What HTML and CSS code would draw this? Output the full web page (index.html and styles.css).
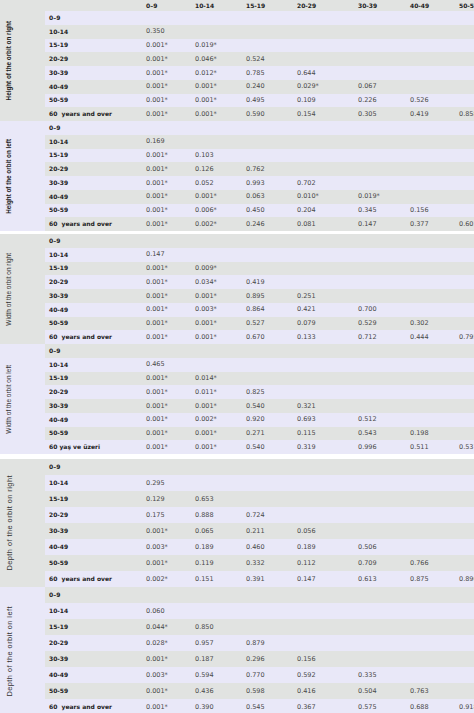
FILE: index.html
```html
<!DOCTYPE html>
<html>
<head>
<meta charset="utf-8">
<link rel="stylesheet" href="styles.css">
</head>
<body>
<div class="table">
  <div class="group g-grey">
    <div class="label bold"><span>Height of the orbit on right</span></div>
    <div class="rows">
      <div class="row hdr g"><span class="age"></span><span>0–9</span><span>10-14</span><span>15-19</span><span>20-29</span><span>30-39</span><span>40-49</span><span>50-59</span></div>
      <div class="row l"><span class="age">0–9</span></div>
      <div class="row g"><span class="age">10-14</span><span>0.350</span></div>
      <div class="row l"><span class="age">15-19</span><span>0.001*</span><span>0.019*</span></div>
      <div class="row g"><span class="age">20-29</span><span>0.001*</span><span>0.046*</span><span>0.524</span></div>
      <div class="row l"><span class="age">30-39</span><span>0.001*</span><span>0.012*</span><span>0.785</span><span>0.644</span></div>
      <div class="row g"><span class="age">40-49</span><span>0.001*</span><span>0.001*</span><span>0.240</span><span>0.029*</span><span>0.067</span></div>
      <div class="row l"><span class="age">50-59</span><span>0.001*</span><span>0.001*</span><span>0.495</span><span>0.109</span><span>0.226</span><span>0.526</span></div>
      <div class="row g"><span class="age">60&nbsp; years and over</span><span>0.001*</span><span>0.001*</span><span>0.590</span><span>0.154</span><span>0.305</span><span>0.419</span><span>0.858</span></div>
    </div>
  </div>
  <div class="group g-lav">
    <div class="label bold"><span>Height of the orbit on left</span></div>
    <div class="rows">
      <div class="row l"><span class="age">0–9</span></div>
      <div class="row g"><span class="age">10-14</span><span>0.169</span></div>
      <div class="row l"><span class="age">15-19</span><span>0.001*</span><span>0.103</span></div>
      <div class="row g"><span class="age">20-29</span><span>0.001*</span><span>0.126</span><span>0.762</span></div>
      <div class="row l"><span class="age">30-39</span><span>0.001*</span><span>0.052</span><span>0.993</span><span>0.702</span></div>
      <div class="row g"><span class="age">40-49</span><span>0.001*</span><span>0.001*</span><span>0.063</span><span>0.010*</span><span>0.019*</span></div>
      <div class="row l"><span class="age">50-59</span><span>0.001*</span><span>0.006*</span><span>0.450</span><span>0.204</span><span>0.345</span><span>0.156</span></div>
      <div class="row g"><span class="age">60&nbsp; years and over</span><span>0.001*</span><span>0.002*</span><span>0.246</span><span>0.081</span><span>0.147</span><span>0.377</span><span>0.601</span></div>
    </div>
  </div>

  <div class="gap gap-sm"></div>

  <div class="group g-grey">
    <div class="label"><span>Width of the orbit on right</span></div>
    <div class="rows">
      <div class="row g"><span class="age">0–9</span></div>
      <div class="row l"><span class="age">10-14</span><span>0.147</span></div>
      <div class="row g"><span class="age">15-19</span><span>0.001*</span><span>0.009*</span></div>
      <div class="row l"><span class="age">20-29</span><span>0.001*</span><span>0.034*</span><span>0.419</span></div>
      <div class="row g"><span class="age">30-39</span><span>0.001*</span><span>0.001*</span><span>0.895</span><span>0.251</span></div>
      <div class="row l"><span class="age">40-49</span><span>0.001*</span><span>0.003*</span><span>0.864</span><span>0.421</span><span>0.700</span></div>
      <div class="row g"><span class="age">50-59</span><span>0.001*</span><span>0.001*</span><span>0.527</span><span>0.079</span><span>0.529</span><span>0.302</span></div>
      <div class="row l"><span class="age">60&nbsp; years and over</span><span>0.001*</span><span>0.001*</span><span>0.670</span><span>0.133</span><span>0.712</span><span>0.444</span><span>0.795–</span></div>
    </div>
  </div>
  <div class="group g-lav">
    <div class="label"><span>Width of the orbit on left</span></div>
    <div class="rows">
      <div class="row g"><span class="age">0–9</span></div>
      <div class="row l"><span class="age">10-14</span><span>0.465</span></div>
      <div class="row g"><span class="age">15-19</span><span>0.001*</span><span>0.014*</span></div>
      <div class="row l"><span class="age">20-29</span><span>0.001*</span><span>0.011*</span><span>0.825</span></div>
      <div class="row g"><span class="age">30-39</span><span>0.001*</span><span>0.001*</span><span>0.540</span><span>0.321</span></div>
      <div class="row l"><span class="age">40-49</span><span>0.001*</span><span>0.002*</span><span>0.920</span><span>0.693</span><span>0.512</span></div>
      <div class="row g"><span class="age">50-59</span><span>0.001*</span><span>0.001*</span><span>0.271</span><span>0.115</span><span>0.543</span><span>0.198</span></div>
      <div class="row l"><span class="age">60 yaş ve üzeri</span><span>0.001*</span><span>0.001*</span><span>0.540</span><span>0.319</span><span>0.996</span><span>0.511</span><span>0.537</span></div>
    </div>
  </div>

  <div class="gap gap-md"></div>

  <div class="group g-grey tall">
    <div class="label depth"><span>Depth of the orbit on right</span></div>
    <div class="rows">
      <div class="row g"><span class="age">0–9</span></div>
      <div class="row l"><span class="age">10-14</span><span>0.295</span></div>
      <div class="row g"><span class="age">15-19</span><span>0.129</span><span>0.653</span></div>
      <div class="row l"><span class="age">20-29</span><span>0.175</span><span>0.888</span><span>0.724</span></div>
      <div class="row g"><span class="age">30-39</span><span>0.001*</span><span>0.065</span><span>0.211</span><span>0.056</span></div>
      <div class="row l"><span class="age">40-49</span><span>0.003*</span><span>0.189</span><span>0.460</span><span>0.189</span><span>0.506</span></div>
      <div class="row g"><span class="age">50-59</span><span>0.001*</span><span>0.119</span><span>0.332</span><span>0.112</span><span>0.709</span><span>0.766</span></div>
      <div class="row l"><span class="age">60&nbsp; years and over</span><span>0.002*</span><span>0.151</span><span>0.391</span><span>0.147</span><span>0.613</span><span>0.875</span><span>0.890</span></div>
    </div>
  </div>
  <div class="group g-lav tall">
    <div class="label depth"><span>Depth of the orbit on left</span></div>
    <div class="rows">
      <div class="row g"><span class="age">0–9</span></div>
      <div class="row l"><span class="age">10-14</span><span>0.060</span></div>
      <div class="row g"><span class="age">15-19</span><span>0.044*</span><span>0.850</span></div>
      <div class="row l"><span class="age">20-29</span><span>0.028*</span><span>0.957</span><span>0.879</span></div>
      <div class="row g"><span class="age">30-39</span><span>0.001*</span><span>0.187</span><span>0.296</span><span>0.156</span></div>
      <div class="row l"><span class="age">40-49</span><span>0.003*</span><span>0.594</span><span>0.770</span><span>0.592</span><span>0.335</span></div>
      <div class="row g"><span class="age">50-59</span><span>0.001*</span><span>0.436</span><span>0.598</span><span>0.416</span><span>0.504</span><span>0.763</span></div>
      <div class="row l"><span class="age">60&nbsp; years and over</span><span>0.001*</span><span>0.390</span><span>0.545</span><span>0.367</span><span>0.575</span><span>0.688</span><span>0.918</span></div>
    </div>
  </div>
</div>
</body>
</html>
```

FILE: styles.css
```css
html, body {
  margin: 0;
  padding: 0;
  background: #ffffff;
  overflow: hidden;
}
body {
  width: 474px;
  height: 713px;
  font-family: "DejaVu Sans", "Liberation Sans", sans-serif;
  color: #4a4a4a;
}
.table {
  width: 474px;
  overflow: hidden;
}
.group {
  display: grid;
  grid-template-columns: 45px 1fr;
}
.g-grey .label { background: #e1e3e1; }
.g-lav .label { background: #e9e8f8; }
.label {
  display: flex;
  align-items: center;
  padding-left: 6px;
  font-family: "Liberation Sans", Arial, sans-serif;
  font-size: 6.5px;
  color: #333333;
}
.label span {
  writing-mode: vertical-rl;
  transform: rotate(180deg);
  white-space: nowrap;
  line-height: 1;
}
.label.bold {
  font-weight: bold;
  font-size: 6.3px;
  color: #222222;
}
.label.depth {
  font-size: 7.4px;
  letter-spacing: 0.45px;
}
.rows {
  display: flex;
  flex-direction: column;
  min-width: 0;
}
.row {
  display: grid;
  grid-template-columns: 98px 49px 51px 51px 61px 52px 49px 60px;
  align-items: center;
  height: 13.75px;
  font-size: 6.5px;
  white-space: nowrap;
}
.row > span {
  padding-left: 3px;
  line-height: 1;
}
.row > .age {
  padding-left: 4px;
  font-weight: bold;
  font-size: 6px;
  color: #222222;
}
.tall .row {
  height: 16px;
}
.row.hdr {
  height: 11px;
}
.row.hdr > span {
  font-weight: bold;
  font-size: 6px;
  color: #222222;
}
.row.g { background: #e1e3e1; }
.row.l { background: #e9e8f8; }
.gap-sm { height: 3px; }
.gap-md { height: 5px; }
```
